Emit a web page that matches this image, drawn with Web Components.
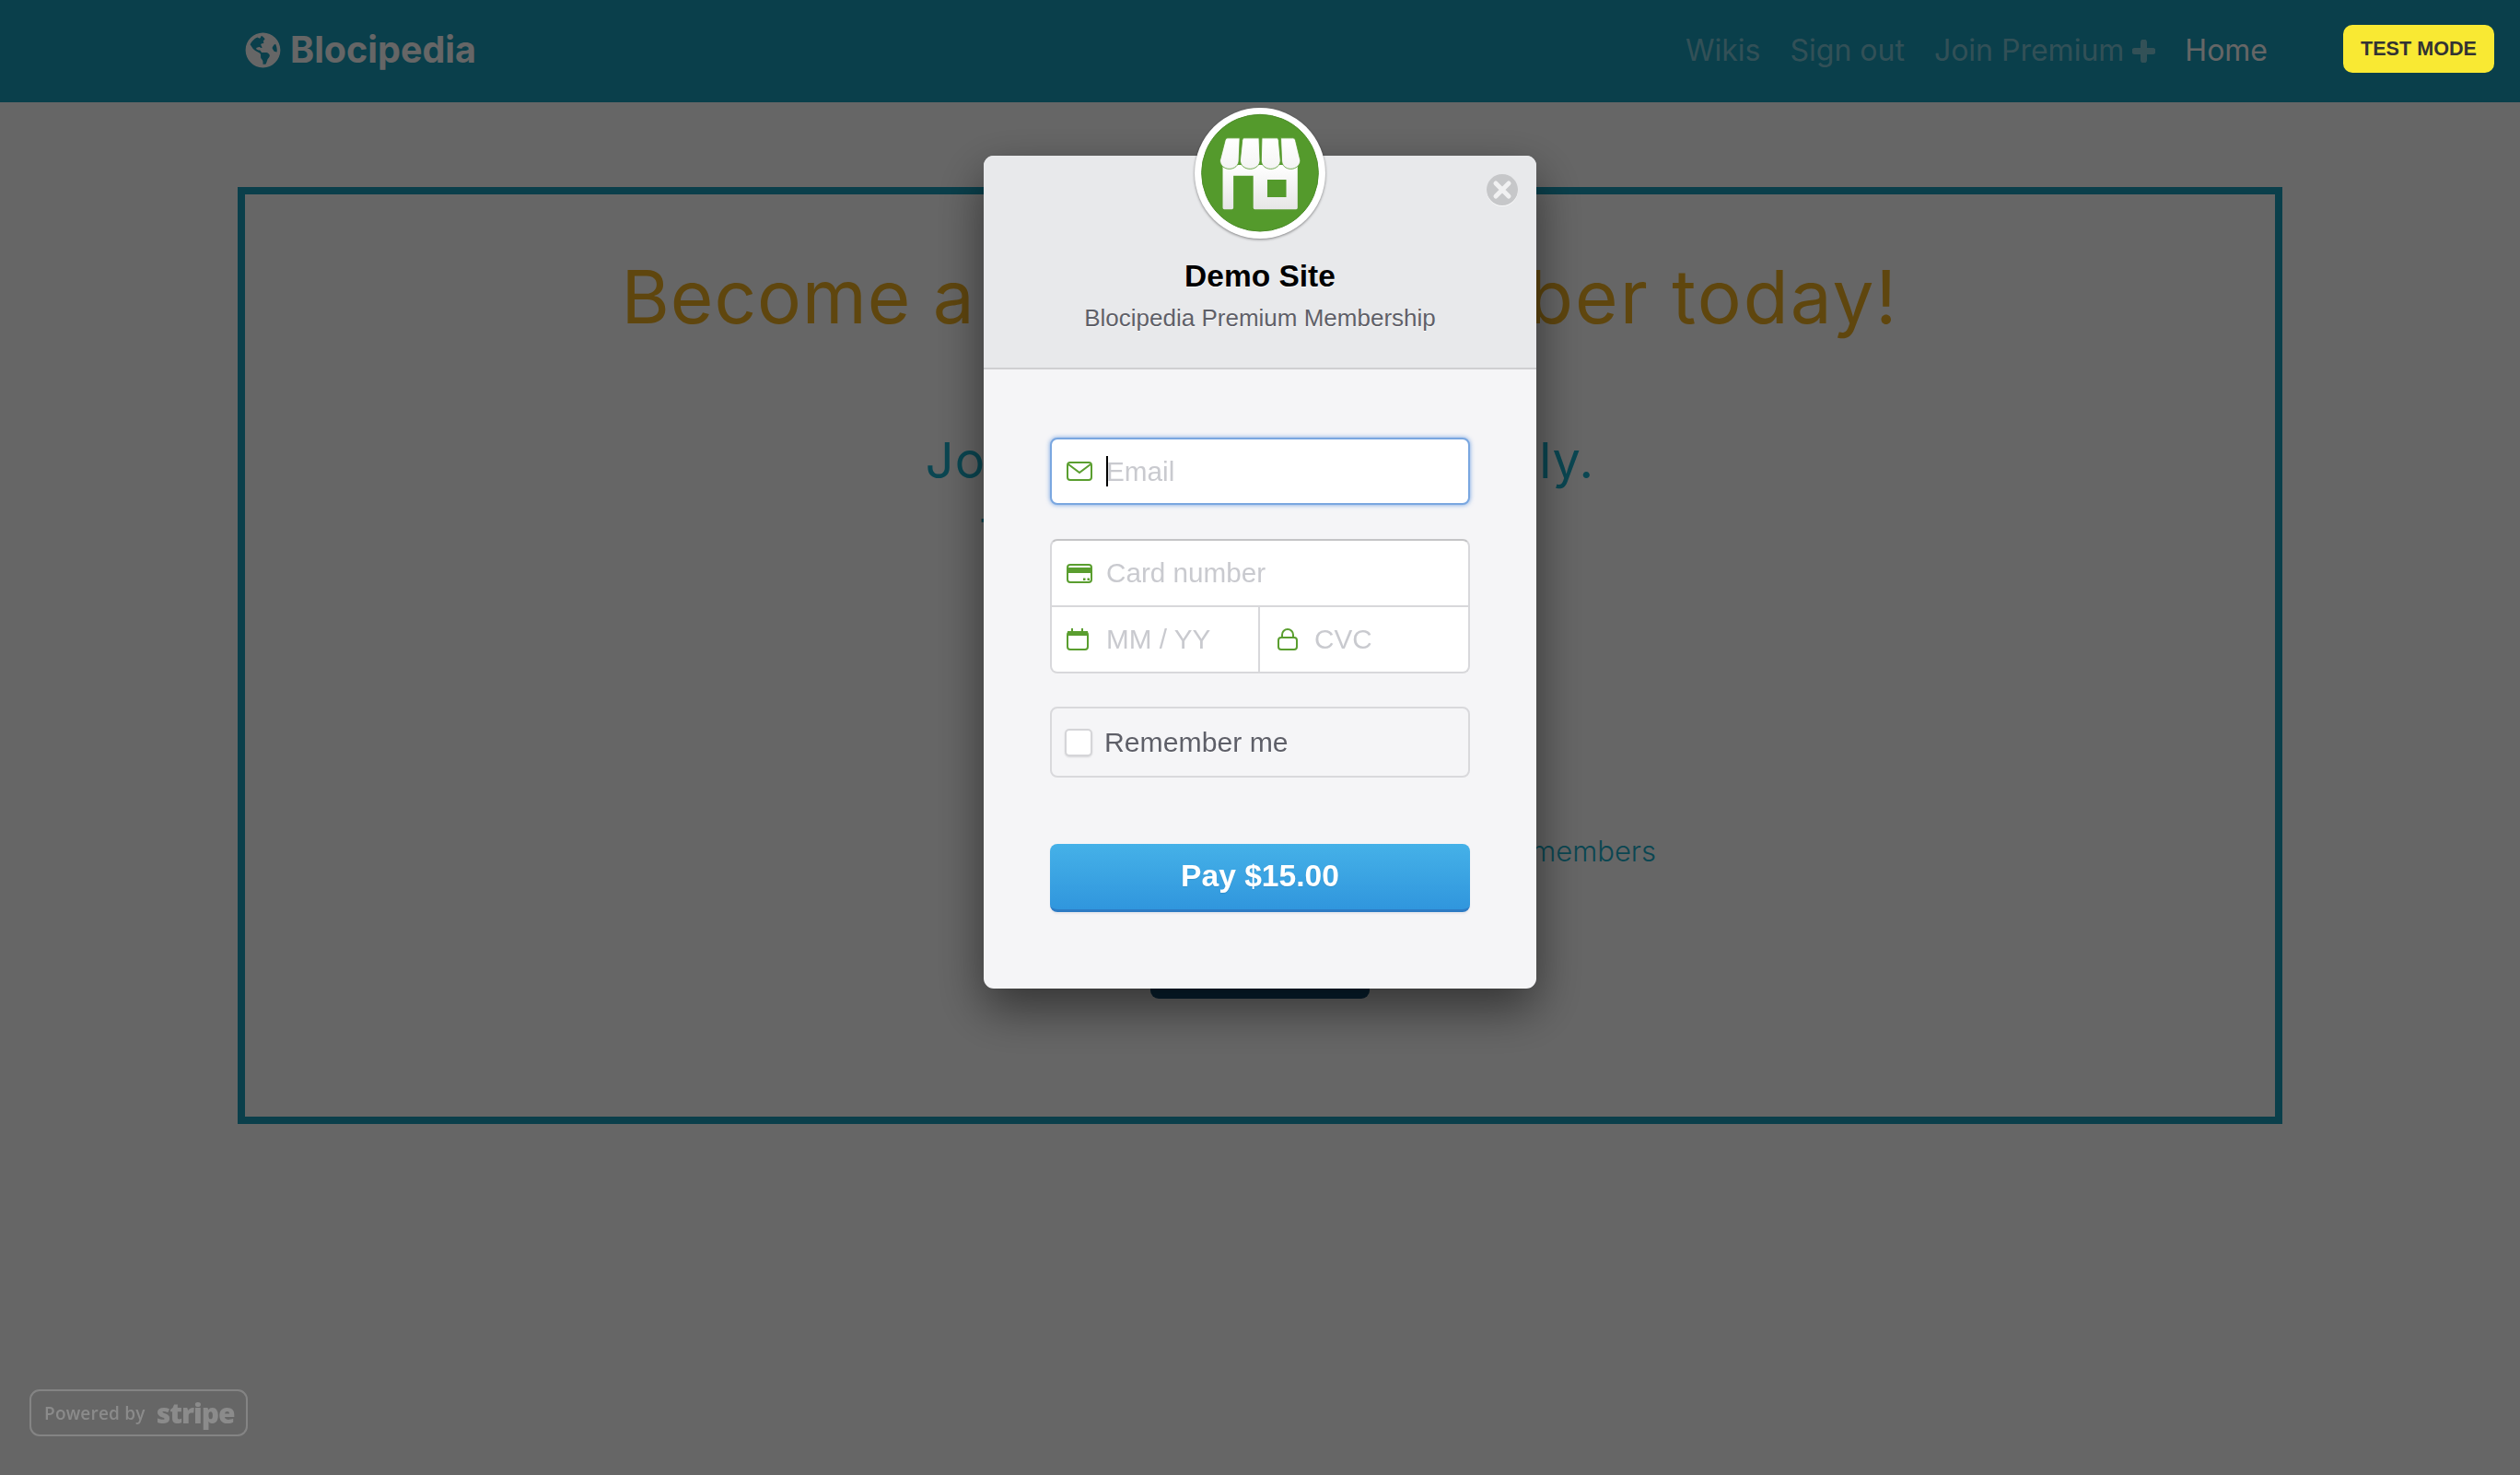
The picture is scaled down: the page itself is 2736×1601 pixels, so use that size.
<!DOCTYPE html>
<html lang="en">
<head>
<meta charset="utf-8">
<title>Blocipedia</title>
<style>
    html, body {
        margin: 0;
        height: 1601px;
        overflow: hidden;
        background: #fff;
        font-family: "Inter", "Liberation Sans", sans-serif;
    }
</style>
</head>
<body>
<site-nav>
    <a slot="links">Wikis</a>
    <a slot="links">Sign out</a>
    <a slot="links">Join Premium <plus-icon></plus-icon></a>
    <a slot="links" class="active" style="color:#fff">Home</a>
</site-nav>

<premium-panel>
    <span slot="title"><span style="letter-spacing:0.9px">Become a</span> <span style="letter-spacing:3.3px">Premium</span> Member today!</span>
    <span slot="lead">Join today for $15 annually.</span>
    <span slot="intro">The benefits of Premium</span>
    <span slot="perk">Share wikis with other members</span>
    <span slot="action">Upgrade</span>
</premium-panel>

<checkout-overlay>
    <test-badge slot="corner">TEST MODE</test-badge>
    <checkout-card>
        <span slot="name">Demo Site</span>
        <span slot="desc">Blocipedia Premium Membership</span>
        <checkout-field slot="email" icon="mail" focused>Email</checkout-field>
        <checkout-field slot="number" icon="card">Card number</checkout-field>
        <checkout-field slot="expiry" icon="calendar">MM / YY</checkout-field>
        <checkout-field slot="cvc" icon="lock" class="cvc" style="--pad:19px;--icon-w:40px">CVC</checkout-field>
        <span slot="remember">Remember me</span>
        <span slot="pay">Pay $15.00</span>
    </checkout-card>
    <stripe-badge slot="foot"></stripe-badge>
</checkout-overlay>

<script>
const GREEN = "#5a9e2f"

var navTemplate = document.createElement("template")
navTemplate.innerHTML = `
    <style>
    :host {
        display: flex;
        align-items: center;
        justify-content: space-between;
        height: 111px;
        padding: 0 274px 0 266px;
        background: #199ebc;
        font-family: "Inter", "Liberation Sans", sans-serif;
    }
    .brand {
        display: flex;
        align-items: center;
        gap: 10px;
        margin-bottom: 3px;
        color: #fff;
        font-size: 39.5px;
        font-weight: 700;
        line-height: 48px;
    }
    .brand svg {
        width: 39px;
        height: 39px;
        fill: #fff;
    }
    nav {
        display: flex;
        gap: 32px;
        margin-bottom: 2px;
        font-size: 32px;
        font-weight: 400;
        line-height: 40px;
        color: rgba(255, 255, 255, 0.45);
    }
    </style>
    <div class="brand">
        <svg viewBox="0 0 496 512"><path d="M248 8C111.03 8 0 119.03 0 256s111.03 248 248 248 248-111.03 248-248S384.97 8 248 8zm82.29 357.6c-3.9 3.88-7.99 7.95-11.31 11.28-2.99 3-5.1 6.7-6.17 10.71-1.51 5.66-2.73 11.38-4.77 16.87l-17.39 46.85c-13.76 3-28 4.69-42.65 4.69v-27.38c1.69-12.62-7.64-36.26-22.63-51.25-6-6-9.37-14.14-9.37-22.63v-32.01c0-11.64-6.27-22.34-16.46-27.97-14.37-7.95-34.81-19.06-48.81-26.11-11.48-5.78-22.1-13.14-31.65-21.75l-.8-.72a114.792 114.792 0 0 1-18.06-20.74c-9.38-13.77-24.66-36.42-34.59-51.14 20.47-45.5 57.36-82.04 103.2-101.89l24.01 12.01C203.48 89.74 216 82.01 216 70.11v-11.3c7.99-1.29 16.12-2.11 24.39-2.42l28.3 28.3c6.25 6.25 6.25 16.38 0 22.63L264 112l-10.34 10.34c-3.12 3.12-3.12 8.19 0 11.31l4.69 4.69c3.12 3.12 3.12 8.19 0 11.31l-8 8a8.008 8.008 0 0 1-5.66 2.34h-8.99c-2.08 0-4.08.81-5.58 2.27l-9.92 9.65a8.008 8.008 0 0 0-1.58 9.31l15.59 31.19c2.66 5.32-1.21 11.58-7.15 11.58h-5.64c-1.93 0-3.79-.7-5.24-1.96l-9.28-8.06a16.017 16.017 0 0 0-15.55-3.1l-31.17 10.39a11.95 11.95 0 0 0-8.17 11.34c0 4.53 2.56 8.66 6.61 10.69l11.08 5.54c9.41 4.71 19.79 7.16 30.31 7.16s22.59 27.29 32 32h66.75c8.49 0 16.62 3.37 22.63 9.37l13.69 13.69a30.503 30.503 0 0 1 8.93 21.57 46.536 46.536 0 0 1-13.72 32.98zM417 274.25c-5.79-1.45-10.84-5-14.15-9.97l-17.98-26.97a23.97 23.97 0 0 1 0-26.62l19.59-29.38c2.32-3.47 5.5-6.29 9.24-8.15l12.98-6.49C440.2 193.59 448 223.87 448 256c0 8.67-.74 17.16-1.82 25.54L417 274.25z"/></svg>
        <span>Blocipedia</span>
    </div>
    <nav><slot name="links"></slot></nav>
`

class SiteNav extends HTMLElement {
    constructor() {
        super()
        this.attachShadow({ mode: "open" })
        this.shadowRoot.appendChild(navTemplate.content.cloneNode(true))
    }
}

class PlusIcon extends HTMLElement {
    constructor() {
        super()
        this.attachShadow({ mode: "open" })
        this.shadowRoot.innerHTML = `
            <style>
            :host { display: inline-block; width: 25px; height: 25px; vertical-align: -2px; }
            svg { display: block; }
            </style>
            <svg width="25" height="25" viewBox="0 0 25 25"><path d="M12.5 3v19M3 12.5h19" fill="none" stroke="currentColor" stroke-width="7" stroke-linecap="round"/></svg>`
    }
}

var panelTemplate = document.createElement("template")
panelTemplate.innerHTML = `
    <style>
    :host {
        display: block;
        box-sizing: border-box;
        height: 1017px;
        margin: 92px 258px 0;
        padding-top: 63px;
        border: 8px solid #199ebc;
        text-align: center;
        color: #1ab0cc;
        font-family: "Inter", "Liberation Sans", sans-serif;
    }
    .title {
        margin: 0;
        font-size: 80px;
        line-height: 96px;
        font-weight: 400;
        letter-spacing: 2px;
        color: #edaf25;
    }
    .lead {
        margin: 97px 0 0;
        font-size: 54px;
        line-height: 65px;
        font-weight: 400;
        letter-spacing: 1px;
    }
    .intro {
        margin: 23px 0 0;
        padding-left: 798px;
        font-size: 34px;
        line-height: 41px;
        font-weight: 600;
        text-align: left;
    }
    .perk {
        margin: 308px 672px 0 0;
        font-size: 31px;
        line-height: 40px;
        font-weight: 300;
        text-align: right;
    }
    .action {
        display: block;
        box-sizing: border-box;
        width: 238px;
        height: 70px;
        margin: 70px auto 0;
        border-radius: 9px;
        background: #14527a;
        color: #fff;
        font-size: 30px;
        line-height: 70px;
    }
    </style>
    <h1 class="title"><slot name="title"></slot></h1>
    <p class="lead"><slot name="lead"></slot></p>
    <p class="intro"><slot name="intro"></slot></p>
    <p class="perk"><slot name="perk"></slot></p>
    <div class="action"><slot name="action"></slot></div>
`

class PremiumPanel extends HTMLElement {
    constructor() {
        super()
        this.attachShadow({ mode: "open" })
        this.shadowRoot.appendChild(panelTemplate.content.cloneNode(true))
    }
}

class CheckoutOverlay extends HTMLElement {
    constructor() {
        super()
        this.attachShadow({ mode: "open" })
        this.shadowRoot.innerHTML = `
            <style>
            :host {
                position: fixed;
                inset: 0;
                display: flex;
                justify-content: center;
                align-items: flex-start;
                padding-top: 169px;
                box-sizing: border-box;
                background: rgba(0, 0, 0, 0.6);
            }
            .corner { position: absolute; top: 27px; right: 28px; }
            .foot { position: absolute; left: 32px; bottom: 42px; }
            </style>
            <div class="corner"><slot name="corner"></slot></div>
            <slot></slot>
            <div class="foot"><slot name="foot"></slot></div>`
    }
}

class TestBadge extends HTMLElement {
    constructor() {
        super()
        this.attachShadow({ mode: "open" })
        this.shadowRoot.innerHTML = `
            <style>
            :host {
                display: flex;
                align-items: center;
                justify-content: center;
                width: 164px;
                height: 52px;
                border-radius: 10px;
                background: #f9e933;
                color: #333;
                font: 700 21.6px/26px "Liberation Sans", Arial, sans-serif;
            }
            </style>
            <slot></slot>`
    }
}

var cardTemplate = document.createElement("template")
cardTemplate.innerHTML = `
    <style>
    :host {
        display: block;
        position: relative;
        width: 600px;
        border-radius: 11px;
        background: #f5f5f7;
        box-shadow: 0 21px 52px rgba(0, 0, 0, 0.5);
        font-family: "Liberation Sans", Arial, sans-serif;
    }
    header {
        box-sizing: border-box;
        height: 232px;
        padding-top: 111px;
        border-radius: 11px 11px 0 0;
        border-bottom: 2px solid #cfcfd1;
        background: #e8e9eb;
        text-align: center;
    }
    .logo {
        position: absolute;
        top: -52px;
        left: 229px;
        width: 142px;
        height: 142px;
        border-radius: 50%;
        background: #fff;
        box-shadow: 0 1px 3px rgba(0, 0, 0, 0.45);
    }
    .logo svg { display: block; width: 142px; height: 142px; }
    .close {
        position: absolute;
        top: 20px;
        right: 20px;
        width: 34px;
        height: 34px;
        border-radius: 50%;
        background: #c6c7c9;
        box-shadow: 0 1px 0 rgba(255, 255, 255, 0.7);
    }
    .close svg { display: block; }
    .name {
        font-size: 33.5px;
        line-height: 40px;
        font-weight: 700;
        color: #000;
        text-shadow: 0 1px 0 #fff;
    }
    .desc {
        margin-top: 9px;
        font-size: 26px;
        line-height: 32px;
        color: #5f6068;
        text-shadow: 0 1px 0 #fff;
    }
    .body {
        display: flex;
        flex-direction: column;
        padding: 74px 72px 83px;
    }
    .email {
        box-sizing: border-box;
        height: 73px;
        border: 2px solid #7aa7e0;
        border-radius: 8px;
        background: #fff;
        box-shadow: 0 0 5px rgba(80, 140, 220, 0.8);
    }
    .group {
        box-sizing: border-box;
        height: 146px;
        margin-top: 37px;
        border: 2px solid #d8d8db;
        border-top-color: #c4c4c6;
        border-radius: 8px;
        background: #fff;
        display: grid;
        grid-template-columns: 226px 1fr;
        grid-template-rows: 72px 1fr;
    }
    .wide { grid-column: 1 / 3; border-bottom: 2px solid #d8d8db; }
    .left { border-right: 2px solid #d8d8db; }
    .remember {
        box-sizing: border-box;
        display: flex;
        align-items: center;
        gap: 13px;
        height: 77px;
        margin-top: 36px;
        padding-left: 14px;
        border: 2px solid #d9d9dc;
        border-radius: 8px;
        font-size: 30.2px;
        color: #5e5f68;
        text-shadow: 0 1px 0 #fff;
    }
    .check {
        box-sizing: border-box;
        width: 30px;
        height: 30px;
        border: 2px solid #d5d5d8;
        border-radius: 5px;
        background: #fff;
        box-shadow: 0 1px 2px rgba(0, 0, 0, 0.12);
    }
    .pay {
        box-sizing: border-box;
        height: 74px;
        margin-top: 72px;
        border-radius: 8px;
        border-bottom: 3px solid #2d7bc4;
        background: linear-gradient(#45b1e8, #3096dd);
        box-shadow: 0 2px 2px rgba(0, 0, 60, 0.06);
        color: #fff;
        font-size: 33.6px;
        font-weight: 700;
        line-height: 70px;
        text-align: center;
        text-shadow: 0 1px 1px rgba(0, 0, 0, 0.1);
    }
    </style>
    <div class="logo">
        <svg viewBox="80 18 428 428">
            <defs>
                <linearGradient id="shop" x1="0" y1="0" x2="0" y2="1"><stop offset="0" stop-color="#fff"/><stop offset="1" stop-color="#e6e6e6"/></linearGradient>
                <linearGradient id="awning" x1="0" y1="0" x2="0" y2="1"><stop offset="0" stop-color="#fff"/><stop offset="1" stop-color="#f4f4f4"/></linearGradient>
            </defs>
            <circle cx="294" cy="231" r="191" fill="#549a2c" stroke="#4c8c28" stroke-width="3"/>
            <path fill="url(#shop)" fill-rule="evenodd" d="M172 205H417V345Q417 350 412 350H277Q272 350 272 345V240H207V345Q207 350 202 350H177Q172 350 172 345ZM318 253V310H380V253Z"/>
            <g fill="url(#awning)" stroke="#549a2c" stroke-width="2.5">
                <path d="M188 117H228L225 190C225 206 210 218 194 218C177 218 163 206 163 190L180 124Q182 117 188 117Z"/>
                <path d="M242 117H291L294 190C294 206 279 218 261.5 218C244 218 229 206 229 190L236 124Q237 117 242 117Z"/>
                <path d="M300 117H349Q354 117 355 124L361 190C361 206 346 218 329.5 218C312 218 298 206 298 190Z"/>
                <path d="M362 117H402Q408 117 410 124L426 190C426 206 411 218 395 218C378 218 365 206 365 190Z"/>
            </g>
        </svg>
    </div>
    <div class="close">
        <svg width="34" height="34" viewBox="0 0 34 34"><path d="M10 10l14 14M24 10L10 24" stroke="#f1f1f2" stroke-width="5" stroke-linecap="round"/></svg>
    </div>
    <header>
        <div class="name"><slot name="name"></slot></div>
        <div class="desc"><slot name="desc"></slot></div>
    </header>
    <div class="body">
        <div class="email"><slot name="email"></slot></div>
        <div class="group">
            <div class="wide"><slot name="number"></slot></div>
            <div class="left"><slot name="expiry"></slot></div>
            <div><slot name="cvc"></slot></div>
        </div>
        <div class="remember"><span class="check"></span><slot name="remember"></slot></div>
        <div class="pay"><slot name="pay"></slot></div>
    </div>
`

class CheckoutCard extends HTMLElement {
    constructor() {
        super()
        this.attachShadow({ mode: "open" })
        this.shadowRoot.appendChild(cardTemplate.content.cloneNode(true))
    }
}

const FIELD_ICONS = {
    mail: `<svg width="28" height="21" viewBox="0 0 28 21"><rect x="1" y="1" width="26" height="19" rx="3"/><path d="M2 3l12 9 12-9"/></svg>`,
    card: `<svg width="28" height="21" viewBox="0 0 28 21"><rect x="1" y="1" width="26" height="19" rx="3"/><path class="solid" d="M1 4h26v6H1zM18 15.5h2.5v2.5H18zM22.5 15.5H25v2.5h-2.5z"/></svg>`,
    calendar: `<svg width="24" height="24" viewBox="0 0 24 24"><rect x="1" y="4" width="22" height="19" rx="3"/><path class="solid" d="M1 3h22v5H1zM5 0h2v3H5zM16 0h2v3h-2z"/></svg>`,
    lock: `<svg width="22" height="24" viewBox="0 0 22 24"><rect x="1" y="10" width="20" height="13" rx="3"/><path d="M5 10V7a6 6 0 0 1 12 0v3"/></svg>`
}

class CheckoutField extends HTMLElement {
    constructor() {
        super()
        this.attachShadow({ mode: "open" })
    }

    connectedCallback() {
        let caret = this.hasAttribute("focused") ? `<i class="caret"></i>` : ""
        this.shadowRoot.innerHTML = `
            <style>
            :host {
                display: flex;
                align-items: center;
                height: 100%;
                padding-left: var(--pad, 16px);
                color: #c9cacf;
                font: 29.7px/34px "Liberation Sans", Arial, sans-serif;
            }
            .icon { display: flex; align-items: center; width: var(--icon-w, 43px); flex: none; }
            svg { display: block; fill: none; stroke: ${GREEN}; stroke-width: 2; }
            svg .solid { fill: ${GREEN}; stroke: none; }
            .caret { width: 2px; height: 33px; margin-right: -2px; background: #000; }
            </style>
            <span class="icon">${FIELD_ICONS[this.getAttribute("icon")]}</span>${caret}<slot></slot>`
    }
}

class StripeBadge extends HTMLElement {
    constructor() {
        super()
        this.attachShadow({ mode: "open" })
        this.shadowRoot.innerHTML = `
            <style>
            :host {
                display: flex;
                align-items: center;
                box-sizing: border-box;
                width: 237px;
                height: 51px;
                padding-left: 14px;
                border: 2px solid rgba(255, 255, 255, 0.2);
                border-radius: 11px;
                color: #8b8b8b;
                font-family: "Open Sans", "Liberation Sans", sans-serif;
                white-space: nowrap;
            }
            .by { font-size: 19px; font-weight: 600; letter-spacing: 0.2px; }
            .logo { margin-left: 12px; font-size: 30px; font-weight: 800; letter-spacing: -1px; line-height: 40px; }
            </style>
            <span class="by">Powered by</span><span class="logo">stripe</span>`
    }
}

customElements.define("site-nav", SiteNav)
customElements.define("plus-icon", PlusIcon)
customElements.define("premium-panel", PremiumPanel)
customElements.define("checkout-overlay", CheckoutOverlay)
customElements.define("test-badge", TestBadge)
customElements.define("checkout-card", CheckoutCard)
customElements.define("checkout-field", CheckoutField)
customElements.define("stripe-badge", StripeBadge)
</script>
</body>
</html>
